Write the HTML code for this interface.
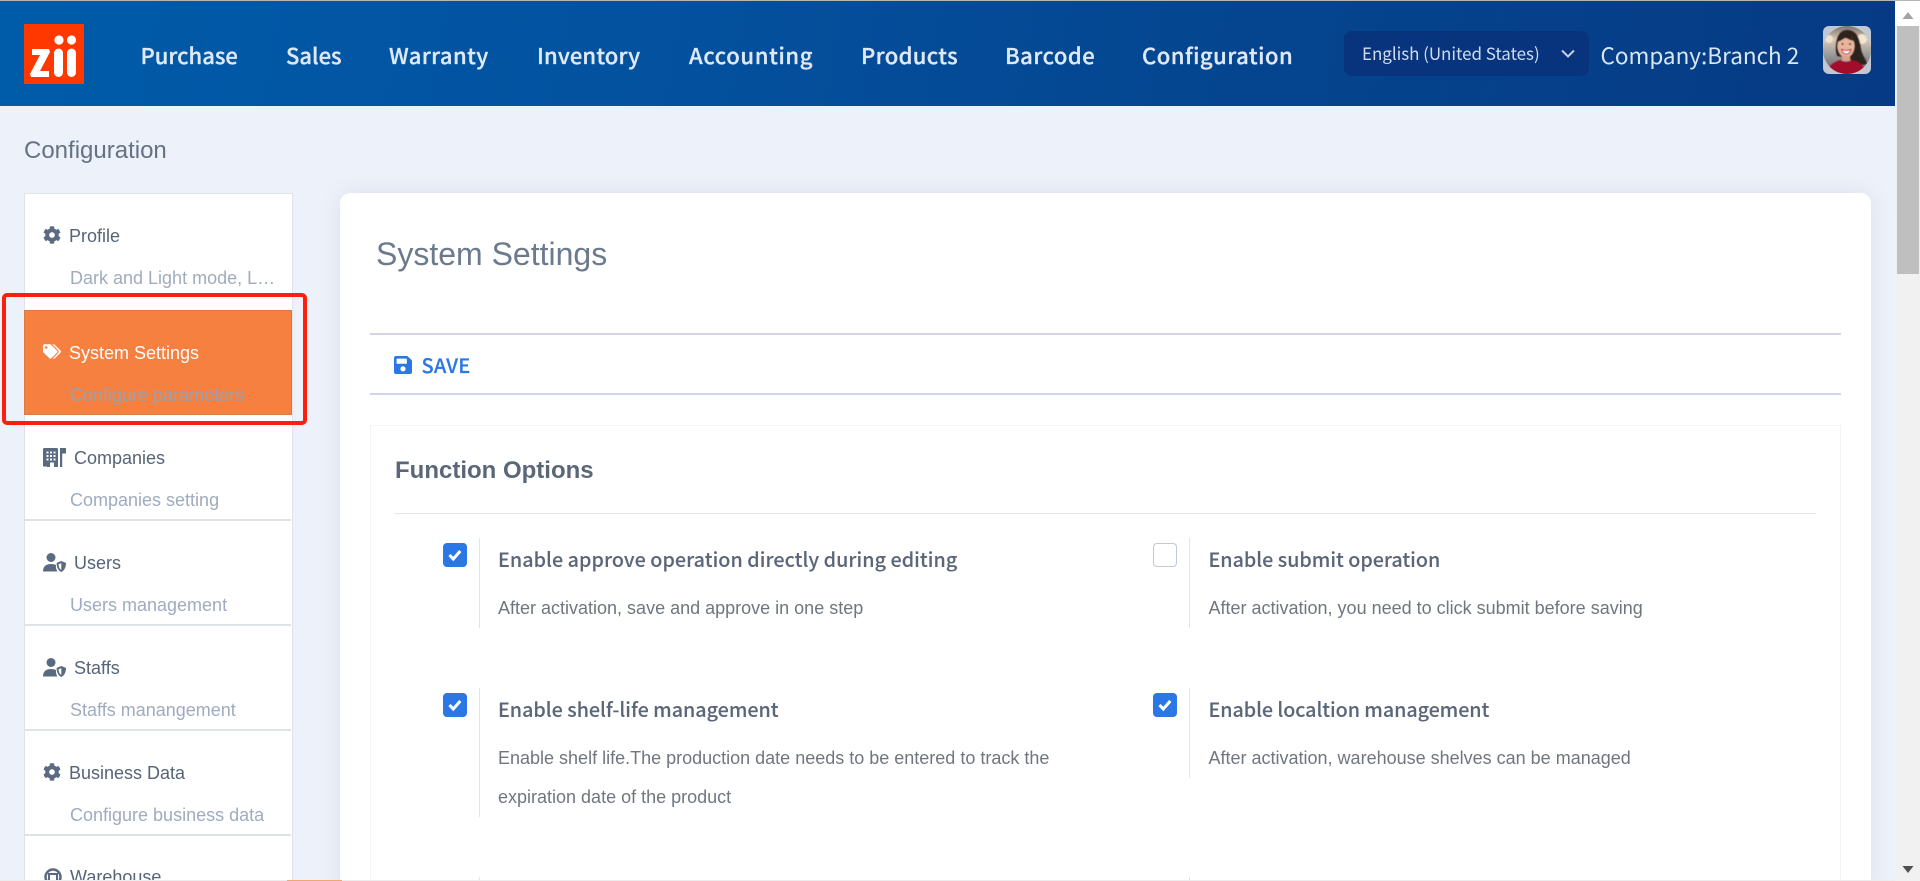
<!DOCTYPE html>
<html lang="en">
<head>
<meta charset="utf-8">
<title>System Settings</title>
<style>
html,body{margin:0;padding:0;width:1920px;height:881px;overflow:hidden;background:#edf1f9}
body{position:relative;font-family:"Liberation Sans",sans-serif}
.a{position:absolute}
.t{position:absolute;white-space:nowrap}
.seg{font-family:"Noto Sans CJK SC","Liberation Sans",sans-serif}
.hdr{left:0;top:1px;width:1895px;height:105px;background:linear-gradient(100deg,#005ca9 0%,#03519f 35%,#05458f 65%,#063a84 100%)}
.nav{top:37px;height:36px;line-height:36px;font-size:22px;font-weight:500;color:#dfe9f6;-webkit-text-stroke:.3px #dfe9f6}
.st{font-size:18px;line-height:24px;height:24px;color:#566478;left:69px}
.ss{font-size:18px;line-height:24px;height:24px;color:#a0abc0;left:70px}
.sd{left:25px;width:266px;height:2px;background:#dfe2e7}
.ic{position:absolute;fill:#5a6a80}
.it{font-size:19.700px;font-weight:500;line-height:26px;color:#5b6779;-webkit-text-stroke:.1px #5b6779}
.de{font-size:18px;line-height:24px;color:#70767f}
.cb{position:absolute;width:24px;height:24px;border-radius:4px;background:#2b78e4}
.cb svg{position:absolute;left:0;top:0}
.cb.off{background:#fff;border:1px solid #bfc9dc;box-sizing:border-box}
.vl{position:absolute;width:1px;background:#e2e4e8}
</style>
</head>
<body>
<div class="a" style="left:0;top:0;width:1920px;height:1px;background:#b5b5b5"></div>
<div class="a hdr"></div>

<svg class="a" style="left:24px;top:24px" width="60" height="60" viewBox="0 0 60 60">
<rect width="60" height="60" fill="#ff3800"/>
<g fill="#fff">
<path d="M8 25h17l1 3-10 19h9v6H7l-1-3 10-19H8z"/>
<rect x="30" y="24.500" width="9" height="28.500" rx="4.500"/>
<rect x="43" y="24.500" width="9" height="28.500" rx="4.500"/>
<circle cx="35" cy="16" r="4.600"/>
<circle cx="47.500" cy="16" r="4.600"/>
</g>
</svg>

<div class="t seg nav" style="left:140.500px;letter-spacing:0">Purchase</div>
<div class="t seg nav" style="left:286px;letter-spacing:0">Sales</div>
<div class="t seg nav" style="left:389px;letter-spacing:.4px">Warranty</div>
<div class="t seg nav" style="left:537px;letter-spacing:.15px">Inventory</div>
<div class="t seg nav" style="left:689px;letter-spacing:.65px">Accounting</div>
<div class="t seg nav" style="left:861px;letter-spacing:.35px">Products</div>
<div class="t seg nav" style="left:1005px;letter-spacing:.5px">Barcode</div>
<div class="t seg nav" style="left:1142px;letter-spacing:.5px">Configuration</div>

<div class="a" style="left:1344px;top:31px;width:245px;height:45px;background:#07347c;border-radius:8px"></div>
<div class="t seg" style="left:1362px;top:38px;line-height:30px;font-size:17px;letter-spacing:-.05px;color:#cfdcf0">English (United States)</div>
<svg class="a" style="left:1559px;top:48px" width="18" height="12" viewBox="0 0 18 12"><path d="M3 2.500l6 6 6-6" fill="none" stroke="#c5cfde" stroke-width="2"/></svg>
<div class="t seg" style="left:1600.500px;top:37px;line-height:36px;font-size:22.500px;color:#d9e6f5">Company:Branch 2</div>

<div class="a" style="left:1823px;top:26px;width:48px;height:48px;background:#c1c8d3;border-radius:6px"></div>
<svg class="a" style="left:1823px;top:26px" width="48" height="48" viewBox="0 0 48 48">
<defs>
<clipPath id="cp"><circle cx="24" cy="24" r="24"/></clipPath>
<linearGradient id="bgp" x1="0" y1="0" x2="0" y2="1"><stop offset="0" stop-color="#7d736a"/><stop offset=".28" stop-color="#d8c8b4"/><stop offset=".6" stop-color="#9a9a9c"/><stop offset="1" stop-color="#5c5c5e"/></linearGradient>
<filter id="bl"><feGaussianBlur stdDeviation=".6"/></filter>
</defs>
<g clip-path="url(#cp)">
<rect width="48" height="48" fill="url(#bgp)"/>
<g filter="url(#bl)">
<circle cx="39" cy="13" r="5" fill="#f3e6d2"/>
<circle cx="6" cy="13" r="4" fill="#f0e2cf"/>
<path d="M13 26C12 13 16 4 24 4c10 0 13 9 14 19 1 6 5 10 6 15l-10 2-8-8-12-2z" fill="#2e211d"/>
<ellipse cx="23" cy="20" rx="8.500" ry="11.500" fill="#e8b59c"/>
<path d="M14.500 16c2-6 6-8 9-8 3 0 5 3 7.500 7-5-1-7-3-9-3-3 2-5 3-7.500 4z" fill="#2e211d"/>
<circle cx="19.500" cy="18" r="1" fill="#2a1a16"/>
<circle cx="27" cy="18" r="1" fill="#2a1a16"/>
<path d="M18.500 23.500c3 1.200 6.500 1.200 9.500 0-.8 3.500-2.500 4.500-4.700 4.500s-4-1-4.800-4.500z" fill="#fff" stroke="#c01a30" stroke-width="1"/>
<rect x="19" y="30" width="8" height="5" fill="#d9a08a"/>
<path d="M4 48c0-8 8-13 14-14 3 2.500 7 2.500 10 0 7 1 15 6 15 14z" fill="#a3102c"/>
</g>
</g>
</svg>

<div class="t" style="left:24px;top:137px;font-size:24px;line-height:28px;color:#667283">Configuration</div>

<!-- Sidebar -->
<div class="a" style="left:24px;top:193px;width:267px;height:700px;background:#fff;border:1px solid #dfe2e7;box-sizing:content-box"></div>

<svg class="ic" style="left:43px;top:226px" width="18" height="18" viewBox="0 0 512 512"><path d="M487.400 315.700l-42.600-24.600c4.300-23.200 4.300-47 0-70.200l42.600-24.600c4.900-2.800 7.100-8.600 5.500-14-11.100-35.600-30-67.800-54.700-94.600-3.800-4.100-10-5.100-14.800-2.300L380.800 110c-17.900-15.400-38.500-27.300-60.800-35.100V25.800c0-5.600-3.900-10.500-9.400-11.700-36.700-8.200-74.300-7.800-109.200 0-5.500 1.200-9.400 6.100-9.400 11.700V75c-22.200 7.900-42.800 19.800-60.800 35.100L88.700 85.500c-4.900-2.800-11-1.900-14.800 2.300-24.700 26.700-43.600 58.900-54.700 94.600-1.700 5.400.6 11.200 5.500 14L67.300 221c-4.300 23.200-4.300 47 0 70.200l-42.600 24.600c-4.900 2.800-7.100 8.600-5.500 14 11.100 35.600 30 67.800 54.700 94.600 3.800 4.100 10 5.100 14.800 2.300l42.600-24.600c17.900 15.400 38.500 27.300 60.800 35.100v49.200c0 5.600 3.900 10.500 9.400 11.700 36.700 8.200 74.300 7.800 109.200 0 5.500-1.200 9.400-6.100 9.400-11.700v-49.200c22.200-7.900 42.800-19.800 60.800-35.100l42.600 24.600c4.900 2.800 11 1.900 14.800-2.300 24.700-26.700 43.600-58.900 54.700-94.600 1.500-5.500-.7-11.300-5.600-14.100zM256 336c-44.100 0-80-35.900-80-80s35.900-80 80-80 80 35.900 80 80-35.900 80-80 80z"/></svg>
<div class="t st" style="top:224px">Profile</div>
<div class="t ss" style="top:266px;width:206px;overflow:hidden;text-overflow:ellipsis">Dark and Light mode, Language</div>

<!-- Orange active -->
<div class="a" style="left:24px;top:310px;width:268px;height:105px;background:#f6803f;border:1px solid #dd7a42;box-sizing:border-box"></div>
<svg class="a" style="left:43px;top:344px" width="18" height="15" viewBox="0 0 640 512" fill="#fff"><path d="M497.941 225.941L286.059 14.059A48 48 0 0 0 252.118 0H48C21.490 0 0 21.490 0 48v204.118a48 48 0 0 0 14.059 33.941l211.882 211.882c18.744 18.745 49.136 18.746 67.882 0l204.118-204.118c18.745-18.745 18.745-49.137 0-67.882zM112 160c-26.510 0-48-21.490-48-48s21.490-48 48-48 48 21.490 48 48-21.490 48-48 48zm513.941 133.823L421.823 497.941c-18.745 18.745-49.137 18.745-67.882 0l-.36-.36L527.640 323.522c16.999-16.999 26.360-39.600 26.360-63.640s-9.362-46.641-26.360-63.640L331.397 0h48.721a48 48 0 0 1 33.941 14.059l211.882 211.882c18.745 18.745 18.745 49.137 0 67.882z"/></svg>
<div class="t st" style="top:341px;color:#fff">System Settings</div>
<div class="t ss" style="top:383px;color:#96a1b4">Configure parameters</div>

<!-- Companies -->
<svg class="ic" style="left:43px;top:448px" width="23" height="19" viewBox="0 0 23 19"><path fill-rule="evenodd" d="M0 1.500A1.500 1.500 0 0 1 1.500 0h12A1.500 1.500 0 0 1 15 1.500V19h-4v-4.500H7V19H4v-.5H0zM3.500 3.500v2h2v-2zm3.500 0v2h2v-2zm3.500 0v2h2v-2zM3.500 7v2h2V7zM7 7v2h2V7zm3.500 0v2h2V7zM3.500 10.500v2h2v-2zm3.500 0v2h2v-2zm3.500 0v2h2v-2z"/><path d="M17 0h2.200v19H17zM19.200 0H23v5.500h-3.800z"/></svg>
<div class="t st" style="top:446px;left:74px">Companies</div>
<div class="t ss" style="top:488px">Companies setting</div>
<div class="a sd" style="top:519px"></div>

<!-- Users -->
<svg class="ic" style="left:43px;top:553px" width="23" height="19" viewBox="0 0 23 19"><circle cx="8" cy="4.500" r="4.500"/><path d="M0 18.500c0-5 3-7.500 8-7.500 2 0 3.800.4 5 1 -.3 2.500.3 5 1.500 6.500H0z"/><path fill-rule="evenodd" d="M18.300 8l4.700 1.900c0 4.300-1.600 7.700-4.700 9.100-3.100-1.400-4.700-4.800-4.700-9.100zm0 2.200l-2.700 1c.1 2.700 1 4.700 2.700 5.600z"/></svg>
<div class="t st" style="top:551px;left:74px">Users</div>
<div class="t ss" style="top:593px">Users management</div>
<div class="a sd" style="top:624px"></div>

<!-- Staffs -->
<svg class="ic" style="left:43px;top:658px" width="23" height="19" viewBox="0 0 23 19"><circle cx="8" cy="4.500" r="4.500"/><path d="M0 18.500c0-5 3-7.500 8-7.500 2 0 3.800.4 5 1 -.3 2.500.3 5 1.500 6.500H0z"/><path fill-rule="evenodd" d="M18.300 8l4.700 1.900c0 4.300-1.600 7.700-4.700 9.100-3.100-1.400-4.700-4.800-4.700-9.100zm0 2.200l-2.700 1c.1 2.700 1 4.700 2.700 5.600z"/></svg>
<div class="t st" style="top:656px;left:74px">Staffs</div>
<div class="t ss" style="top:698px">Staffs manangement</div>
<div class="a sd" style="top:729px"></div>

<!-- Business Data -->
<svg class="ic" style="left:43px;top:763px" width="18" height="18" viewBox="0 0 512 512"><path d="M487.400 315.700l-42.600-24.600c4.300-23.200 4.300-47 0-70.200l42.600-24.600c4.900-2.800 7.100-8.600 5.500-14-11.100-35.600-30-67.800-54.700-94.600-3.800-4.100-10-5.100-14.800-2.300L380.800 110c-17.900-15.400-38.500-27.300-60.800-35.100V25.800c0-5.600-3.900-10.500-9.400-11.700-36.700-8.200-74.300-7.800-109.200 0-5.500 1.200-9.400 6.100-9.400 11.700V75c-22.200 7.900-42.800 19.800-60.800 35.100L88.700 85.500c-4.900-2.800-11-1.900-14.800 2.300-24.700 26.700-43.600 58.900-54.700 94.600-1.700 5.400.6 11.200 5.500 14L67.300 221c-4.300 23.200-4.300 47 0 70.200l-42.600 24.600c-4.900 2.800-7.100 8.600-5.500 14 11.100 35.600 30 67.800 54.700 94.600 3.800 4.100 10 5.100 14.800 2.300l42.600-24.600c17.900 15.400 38.500 27.300 60.800 35.100v49.200c0 5.600 3.900 10.500 9.400 11.700 36.700 8.200 74.300 7.800 109.200 0 5.500-1.200 9.400-6.100 9.400-11.700v-49.200c22.200-7.900 42.800-19.800 60.800-35.100l42.600 24.600c4.900 2.800 11 1.900 14.800-2.300 24.700-26.700 43.600-58.900 54.700-94.600 1.500-5.500-.7-11.300-5.600-14.100zM256 336c-44.100 0-80-35.900-80-80s35.900-80 80-80 80 35.900 80 80-35.900 80-80 80z"/></svg>
<div class="t st" style="top:761px">Business Data</div>
<div class="t ss" style="top:803px">Configure business data</div>
<div class="a sd" style="top:834px"></div>

<!-- Warehouse -->
<svg class="a" style="left:44px;top:868px" width="18" height="18" viewBox="0 0 18 18"><circle cx="9" cy="9" r="7.500" fill="none" stroke="#5a6a80" stroke-width="2.500"/><rect x="5" y="6" width="8" height="8" fill="none" stroke="#5a6a80" stroke-width="2"/></svg>
<div class="t st" style="top:865px;left:70px">Warehouse</div>

<!-- Red highlight -->
<div class="a" style="left:2px;top:293px;width:305px;height:132px;border:4px solid #ff1e0e;border-radius:5px;box-sizing:border-box"></div>

<!-- Card -->
<div class="a" style="left:340px;top:193px;width:1531px;height:700px;background:#fff;border-radius:10px;box-shadow:0 0 20px rgba(110,125,170,.14)"></div>
<div class="t" style="left:376px;top:236px;font-size:32px;line-height:36px;color:#6c7a8d">System Settings</div>
<div class="a" style="left:370px;top:333px;width:1471px;height:2px;background:#cfd5e6"></div>
<svg class="a" style="left:394px;top:356px" width="18" height="18" viewBox="0 32 448 448" fill="#2b78e4"><path d="M433.941 129.941l-83.882-83.882A48 48 0 0 0 316.118 32H48C21.490 32 0 53.490 0 80v352c0 26.510 21.490 48 48 48h352c26.510 0 48-21.490 48-48V163.882a48 48 0 0 0-14.059-33.941zM224 416c-35.346 0-64-28.654-64-64 0-35.346 28.654-64 64-64s64 28.654 64 64c0 35.346-28.654 64-64 64zm96-304.520V212c0 6.627-5.373 12-12 12H76c-6.627 0-12-5.373-12-12V108c0-6.627 5.373-12 12-12h228.520c3.183 0 6.235 1.264 8.485 3.515l3.480 3.480A11.996 11.996 0 0 1 320 111.480z"/></svg>
<div class="t seg" style="left:421.500px;top:350px;font-size:20px;line-height:30px;font-weight:500;color:#2b78e4;letter-spacing:.2px;-webkit-text-stroke:.2px #2b78e4">SAVE</div>
<div class="a" style="left:370px;top:393px;width:1471px;height:2px;background:#cfd5e6"></div>

<div class="a" style="left:370px;top:425px;width:1471px;height:470px;border:1px solid #f1f3f6;box-sizing:border-box"></div>
<div class="t" style="left:395px;top:456px;font-size:24px;line-height:30px;font-weight:bold;color:#5b6779">Function Options</div>
<div class="a" style="left:395px;top:513px;width:1421px;height:1px;background:#e5e8ec"></div>

<!-- Row 1 -->
<div class="cb" style="left:443px;top:543px"><svg width="24" height="24"><path d="M6.500 12l3.800 4 7-8" fill="none" stroke="#fff" stroke-width="3"/></svg></div>
<div class="vl" style="left:479px;top:538px;height:90px"></div>
<div class="t seg it" style="left:498px;top:545.500px;letter-spacing:.06px">Enable approve operation directly during editing</div>
<div class="t de" style="left:498px;top:596px">After activation, save and approve in one step</div>

<div class="cb off" style="left:1153px;top:543px"></div>
<div class="vl" style="left:1189px;top:538px;height:90px"></div>
<div class="t seg it" style="left:1208.500px;top:545.500px">Enable submit operation</div>
<div class="t de" style="left:1208.500px;top:596px">After activation, you need to click submit before saving</div>

<!-- Row 2 -->
<div class="cb" style="left:443px;top:693px"><svg width="24" height="24"><path d="M6.500 12l3.800 4 7-8" fill="none" stroke="#fff" stroke-width="3"/></svg></div>
<div class="vl" style="left:479px;top:688px;height:129px"></div>
<div class="t seg it" style="left:498px;top:695.500px">Enable shelf-life management</div>
<div class="t de" style="left:498px;top:746px">Enable shelf life.The production date needs to be entered to track the</div>
<div class="t de" style="left:498px;top:785px">expiration date of the product</div>

<div class="cb" style="left:1153px;top:693px"><svg width="24" height="24"><path d="M6.500 12l3.800 4 7-8" fill="none" stroke="#fff" stroke-width="3"/></svg></div>
<div class="vl" style="left:1189px;top:688px;height:90px"></div>
<div class="t seg it" style="left:1208.500px;top:695.500px;letter-spacing:-.05px">Enable localtion management</div>
<div class="t de" style="left:1208.500px;top:746px">After activation, warehouse shelves can be managed</div>

<!-- Row 3 stubs -->
<div class="vl" style="left:479px;top:877px;height:4px"></div>
<div class="vl" style="left:1189px;top:877px;height:4px"></div>

<!-- Bottom edge -->
<div class="a" style="left:0;top:880px;width:1920px;height:1px;background:#ececec"></div>
<div class="a" style="left:287px;top:880px;width:55px;height:1px;background:#f4a768"></div>

<!-- Scrollbar -->
<div class="a" style="left:1895px;top:1px;width:25px;height:880px;background:#f1f1f1"></div>
<div class="a" style="left:1895px;top:1px;width:25px;height:25px;background:#fff"></div>
<div class="a" style="left:1897px;top:26px;width:22px;height:248px;background:#bfbfbf"></div>
<svg class="a" style="left:1901px;top:11px" width="14" height="9"><path d="M1.500 8h11L7 1z" fill="#a3a3a3"/></svg>
<svg class="a" style="left:1901px;top:865px" width="14" height="9"><path d="M1.500 1h11L7 8z" fill="#505050"/></svg>
</body>
</html>
